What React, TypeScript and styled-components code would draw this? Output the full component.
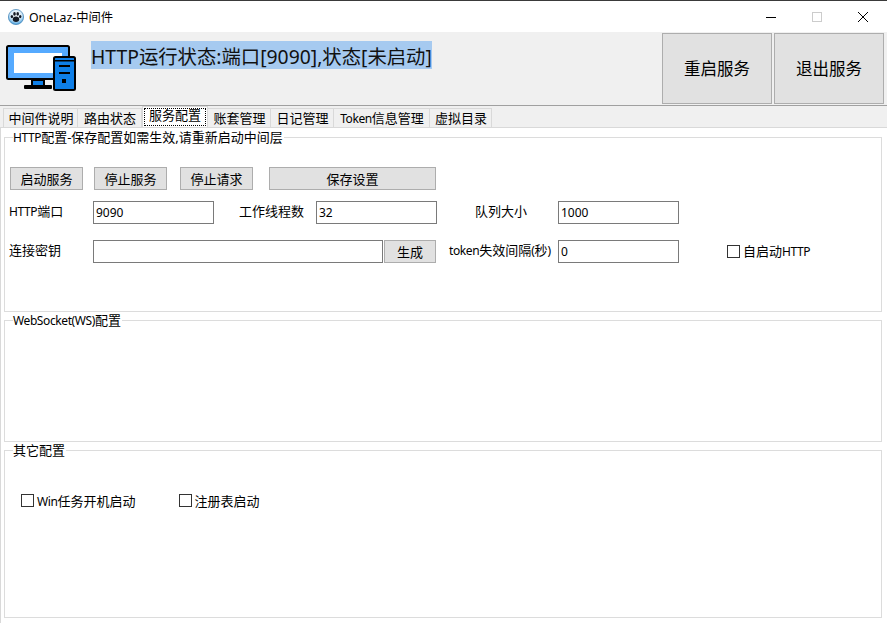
import styled, { createGlobalStyle } from "styled-components";

const GlobalStyle = createGlobalStyle`
    * {
        box-sizing: border-box;
    }
    html, body {
        margin: 0;
        padding: 0;
        background: #fff;
    }
    body {
        font-family: "Noto Sans", "Noto Sans CJK SC", sans-serif;
        font-size: 12px;
        color: #000;
    }
`;

const Window = styled.div`
    width: 887px;
    height: 623px;
    display: flex;
    flex-direction: column;
    overflow: hidden;
    background: #fff;
    border-top: 1px solid #3a3a3a;
`;

const TitleBar = styled.div`
    height: 31px;
    flex: none;
    display: flex;
    align-items: center;
    padding: 0 1px 0 8px;
    background: #fff;
`;

const TitleText = styled.span`
    margin-left: 5px;
    font-size: 12.3px;
    flex: 1;
`;

const WinButton = styled.div`
    width: 46px;
    height: 30px;
    display: flex;
    align-items: center;
    justify-content: center;
`;

const Header = styled.div`
    height: 74px;
    flex: none;
    display: flex;
    align-items: flex-start;
    background: #f0f0f0;
    border-bottom: 1px solid #a0a0a0;
    padding: 1px 1px 0 6px;
`;

const Status = styled.div`
    flex: 1;
    padding-top: 8px;
    margin-left: -1px;
`;

const Selected = styled.span`
    display: inline-block;
    font-size: 19.35px;
    line-height: 31px;
    height: 28px;
    margin-left: 16px;
    color: #111;
    background: #a6caf0;
`;

const BigButton = styled.button`
    width: 110px;
    height: 71px;
    margin-right: 2px;
    padding: 0 0 2px;
    background: #e1e1e1;
    border: 1px solid #adadad;
    font: inherit;
    font-size: 16.5px;
    color: #000;
`;

const TabStrip = styled.div`
    height: 22px;
    flex: none;
    display: flex;
    align-items: flex-end;
    padding-left: 3px;
    background: #f0f0f0;
    border-bottom: 1px solid #d9d9d9;
`;

const Tab = styled.div<{ $w: number; $active?: boolean }>`
    width: ${(p) => p.$w}px;
    height: ${(p) => (p.$active ? 21 : 19)}px;
    display: flex;
    align-items: ${(p) => (p.$active ? "flex-start" : "center")};
    justify-content: center;
    padding: ${(p) => (p.$active ? "1px 0 0" : "0 0 2px 1px")};
    font-size: 13px;
    white-space: nowrap;
    border: 1px solid #d9d9d9;
    border-bottom: none;
    border-left-width: ${(p) => (p.$active ? 1 : 0)}px;
    background: ${(p) => (p.$active ? "#fff" : "#f0f0f0")};
    &:first-child {
        border-left-width: 1px;
    }
`;

const FocusRing = styled.span`
    padding: 0 5px;
    height: 18px;
    line-height: 15px;
    outline: 1px dotted #000;
    outline-offset: -1px;
`;

// latin runs look narrow in the original UI font
const Latin = styled.span`
    font-size: 12px;
    letter-spacing: -0.4px;
`;

const Page = styled.div`
    flex: 1;
    display: flex;
    flex-direction: column;
    padding: 1px 5px 5px 3px;
    border-left: 1px solid #d9d9d9;
    background: #fff;
`;

const Group = styled.fieldset<{ $h: number }>`
    height: ${(p) => p.$h}px;
    flex: none;
    margin: 0;
    min-width: 0;
    padding: 0;
    border: 1px solid #dcdcdc;
`;

const Legend = styled.legend`
    margin-left: 8px;
    padding: 0 1px 0 0;
    font-size: 13px;
    line-height: 16px;
`;

const Row = styled.div<{ $top: number }>`
    display: flex;
    align-items: center;
    height: 23px;
    margin-top: ${(p) => p.$top}px;
    padding-left: 4px;
`;

const Button = styled.button<{ $w: number; $gap?: number }>`
    width: ${(p) => p.$w}px;
    height: 23px;
    margin-left: ${(p) => p.$gap ?? 0}px;
    padding: 0 0 1px;
    flex: none;
    background: #e1e1e1;
    border: 1px solid #adadad;
    font: inherit;
    font-size: 13px;
    color: #000;
`;

const Label = styled.label<{ $w: number; $gap?: number }>`
    width: ${(p) => p.$w}px;
    margin-left: ${(p) => p.$gap ?? 0}px;
    margin-bottom: 5px;
    flex: none;
    font-size: 13px;
    white-space: nowrap;
`;

const Input = styled.input<{ $w: number; $gap?: number }>`
    width: ${(p) => p.$w}px;
    height: 23px;
    margin-left: ${(p) => p.$gap ?? 0}px;
    flex: none;
    padding: 0 2px;
    border: 1px solid #7a7a7a;
    font: inherit;
    font-size: 12px;
    color: #000;
    background: #fff;
    outline: none;
`;

const Check = styled.label<{ $gap: number }>`
    display: flex;
    align-items: center;
    margin-left: ${(p) => p.$gap}px;
    margin-bottom: 2px;
    font-size: 13px;
    white-space: nowrap;
`;

const Box = styled.span`
    width: 13px;
    height: 13px;
    margin: 1px 3px 0 0;
    border: 1px solid #333;
    background: #fff;
    flex: none;
`;

const OtherRow = styled.div`
    display: flex;
    align-items: center;
    height: 16px;
    margin-top: 35px;
`;

const PawIcon = () => (
    <svg width="16" height="16" viewBox="0 0 16 16">
        <defs>
            <radialGradient id="pawBg" cx="50%" cy="35%" r="65%">
                <stop offset="0%" stopColor="#ffffff" />
                <stop offset="60%" stopColor="#cfe6f7" />
                <stop offset="100%" stopColor="#3f9ad8" />
            </radialGradient>
        </defs>
        <circle cx="8" cy="8" r="7.6" fill="url(#pawBg)" stroke="#3b7fb5" strokeWidth="0.7" />
        <g fill="#151a24">
            <ellipse cx="8" cy="10.2" rx="3.2" ry="2.7" />
            <ellipse cx="3.9" cy="7.6" rx="1.2" ry="1.6" />
            <ellipse cx="6.5" cy="4.9" rx="1.3" ry="1.8" />
            <ellipse cx="9.7" cy="4.9" rx="1.3" ry="1.8" />
            <ellipse cx="12.2" cy="7.6" rx="1.2" ry="1.6" />
        </g>
    </svg>
);

const MonitorIcon = () => (
    <svg width="70" height="46" viewBox="0 0 70 46" style={{ marginTop: 12, flex: "none" }}>
        <rect x="1" y="1" width="62" height="33" rx="1.5" fill="#55aaff" stroke="#000" strokeWidth="2" />
        <rect x="8" y="8" width="48" height="20" fill="#fff" />
        <rect x="26" y="35" width="12" height="6" fill="#0e7fe8" stroke="#000" strokeWidth="2" />
        <rect x="18" y="40" width="28" height="4" rx="1" fill="#000" />
        <rect x="48" y="12" width="21" height="33" rx="1.5" fill="#0e7fe8" stroke="#000" strokeWidth="2" />
        <rect x="48" y="15" width="21" height="1.5" fill="#000" />
        <rect x="53" y="20" width="11" height="2" fill="#000" />
        <rect x="53" y="27" width="11" height="2" fill="#000" />
        <rect x="56" y="34" width="4" height="4" fill="#000" />
    </svg>
);

export default function App() {
    return (
        <>
            <GlobalStyle />
            <Window>
                <TitleBar>
                    <PawIcon />
                    <TitleText>OneLaz-中间件</TitleText>
                    <WinButton>
                        <svg width="10" height="10" viewBox="0 0 10 10">
                            <path d="M0 5.5H10" stroke="#000" strokeWidth="1" />
                        </svg>
                    </WinButton>
                    <WinButton>
                        <svg width="10" height="10" viewBox="0 0 10 10">
                            <rect x="0.5" y="0.5" width="9" height="9" fill="none" stroke="#ccc" />
                        </svg>
                    </WinButton>
                    <WinButton>
                        <svg width="10" height="10" viewBox="0 0 10 10">
                            <path d="M0 0L10 10M10 0L0 10" stroke="#000" strokeWidth="1" />
                        </svg>
                    </WinButton>
                </TitleBar>
                <Header>
                    <MonitorIcon />
                    <Status>
                        <Selected>HTTP运行状态:端口[9090],状态[未启动]</Selected>
                    </Status>
                    <BigButton>重启服务</BigButton>
                    <BigButton>退出服务</BigButton>
                </Header>
                <TabStrip>
                    <Tab $w={75}>中间件说明</Tab>
                    <Tab $w={64}>路由状态</Tab>
                    <Tab $w={66} $active>
                        <FocusRing>服务配置</FocusRing>
                    </Tab>
                    <Tab $w={63}>账套管理</Tab>
                    <Tab $w={63}>日记管理</Tab>
                    <Tab $w={96}>
                        <span>
                            <Latin>Token</Latin>信息管理
                        </span>
                    </Tab>
                    <Tab $w={62}>虚拟目录</Tab>
                </TabStrip>
                <Page>
                    <Group $h={183}>
                        <Legend>
                            <Latin>HTTP</Latin>配置-保存配置如需生效,请重新启动中间层
                        </Legend>
                        <Row $top={21}>
                            <Button $w={73} $gap={1}>启动服务</Button>
                            <Button $w={73} $gap={11}>停止服务</Button>
                            <Button $w={73} $gap={13}>停止请求</Button>
                            <Button $w={167} $gap={16}>保存设置</Button>
                        </Row>
                        <Row $top={11}>
                            <Label $w={84}>
                                <Latin>HTTP</Latin>端口
                            </Label>
                            <Input $w={121} defaultValue="9090" />
                            <Label $w={77} $gap={25}>工作线程数</Label>
                            <Input $w={121} defaultValue="32" />
                            <Label $w={83} $gap={38}>队列大小</Label>
                            <Input $w={121} defaultValue="1000" />
                        </Row>
                        <Row $top={16}>
                            <Label $w={84}>连接密钥</Label>
                            <Input $w={290} />
                            <Button $w={52} $gap={1}>生成</Button>
                            <Label $w={109} $gap={13}>
                                <Latin>token</Latin>失效间隔<Latin>(</Latin>秒<Latin>)</Latin>
                            </Label>
                            <Input $w={121} defaultValue="0" />
                            <Check $gap={48}>
                                <Box />
                                <span>
                                    自启动<Latin>HTTP</Latin>
                                </span>
                            </Check>
                        </Row>
                    </Group>
                    <Group $h={130}>
                        <Legend>
                            <Latin>WebSocket(WS)</Latin>配置
                        </Legend>
                    </Group>
                    <Group $h={176}>
                        <Legend>其它配置</Legend>
                        <OtherRow>
                            <Check $gap={16}>
                                <Box />
                                <span>
                                    <Latin>Win</Latin>任务开机启动
                                </span>
                            </Check>
                            <Check $gap={43}>
                                <Box />
                                注册表启动
                            </Check>
                        </OtherRow>
                    </Group>
                </Page>
            </Window>
        </>
    );
}
